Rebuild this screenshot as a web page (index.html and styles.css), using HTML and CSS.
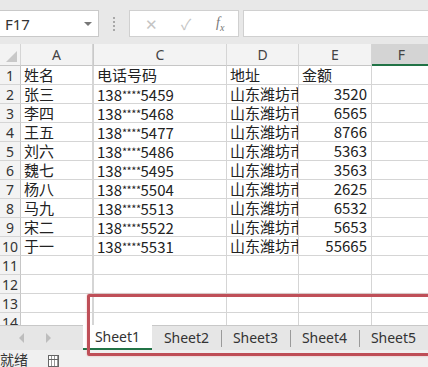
FILE: index.html
```html
<!DOCTYPE html>
<html lang="zh">
<head>
<meta charset="utf-8">
<link rel="stylesheet" href="styles.css">
</head>
<body>
<div class="app">
  <div class="toolbar">
    <div class="namebox"><span class="name">F17</span><span class="caret"></span></div>
    <div class="grip"><i></i><i></i><i></i><i></i></div>
    <div class="fbtns">
      <span class="fb">✕</span>
      <span class="fb">✓</span>
      <span class="fx">f<sub>x</sub></span>
    </div>
    <div class="finput"></div>
  </div>

  <div class="sheet">
    <div class="grid">
      <div class="ch corner"><span class="tri"></span></div>
      <div class="ch">A</div>
      <div class="ch hid">C</div>
      <div class="ch">D</div>
      <div class="ch">E</div>
      <div class="ch sel">F</div>

      <div class="rh">1</div><div class="c">姓名</div><div class="c hid">电话号码</div><div class="c">地址</div><div class="c">金额</div><div class="c"></div>
      <div class="rh">2</div><div class="c">张三</div><div class="c hid">138<span class="st">****</span>5459</div><div class="c clip">山东潍坊市</div><div class="c n">3520</div><div class="c"></div>
      <div class="rh">3</div><div class="c">李四</div><div class="c hid">138<span class="st">****</span>5468</div><div class="c clip">山东潍坊市</div><div class="c n">6565</div><div class="c"></div>
      <div class="rh">4</div><div class="c">王五</div><div class="c hid">138<span class="st">****</span>5477</div><div class="c clip">山东潍坊市</div><div class="c n">8766</div><div class="c"></div>
      <div class="rh">5</div><div class="c">刘六</div><div class="c hid">138<span class="st">****</span>5486</div><div class="c clip">山东潍坊市</div><div class="c n">5363</div><div class="c"></div>
      <div class="rh">6</div><div class="c">魏七</div><div class="c hid">138<span class="st">****</span>5495</div><div class="c clip">山东潍坊市</div><div class="c n">3563</div><div class="c"></div>
      <div class="rh">7</div><div class="c">杨八</div><div class="c hid">138<span class="st">****</span>5504</div><div class="c clip">山东潍坊市</div><div class="c n">2625</div><div class="c"></div>
      <div class="rh">8</div><div class="c">马九</div><div class="c hid">138<span class="st">****</span>5513</div><div class="c clip">山东潍坊市</div><div class="c n">6532</div><div class="c"></div>
      <div class="rh">9</div><div class="c">宋二</div><div class="c hid">138<span class="st">****</span>5522</div><div class="c clip">山东潍坊市</div><div class="c n">5653</div><div class="c"></div>
      <div class="rh">10</div><div class="c">于一</div><div class="c hid">138<span class="st">****</span>5531</div><div class="c clip">山东潍坊市</div><div class="c n">55665</div><div class="c"></div>
      <div class="rh">11</div><div class="c"></div><div class="c hid"></div><div class="c"></div><div class="c"></div><div class="c"></div>
      <div class="rh">12</div><div class="c"></div><div class="c hid"></div><div class="c"></div><div class="c"></div><div class="c"></div>
      <div class="rh">13</div><div class="c"></div><div class="c hid"></div><div class="c"></div><div class="c"></div><div class="c"></div>
      <div class="rh">14</div><div class="c"></div><div class="c hid"></div><div class="c"></div><div class="c"></div><div class="c"></div>
    </div>
  </div>

  <div class="tabbar">
    <div class="nav"><span class="arr left"></span><span class="arr right"></span></div>
    <div class="tabs">
      <div class="tab active">Sheet1</div>
      <div class="tab">Sheet2</div>
      <div class="tab">Sheet3</div>
      <div class="tab">Sheet4</div>
      <div class="tab">Sheet5</div>
    </div>
  </div>

  <div class="status">
    <span class="ready">就绪</span>
    <span class="macro"></span>
  </div>

  <div class="mark"></div>
</div>
</body>
</html>
```

FILE: styles.css
```css
* { box-sizing: border-box; }
html, body { margin: 0; padding: 0; }
body {
  width: 428px;
  height: 367px;
  overflow: hidden;
  background: #ffffff;
  font-family: "Noto Sans CJK SC", "Noto Sans", sans-serif;
  color: #222;
}
.app {
  position: relative;
  width: 428px;
  height: 367px;
  display: flex;
  flex-direction: column;
  overflow: hidden;
}

/* toolbar */
.toolbar {
  height: 44px;
  flex: none;
  background: #e8e8e8;
  display: flex;
  align-items: flex-start;
  padding-top: 10px;
}
.namebox {
  width: 100px;
  height: 27px;
  margin-left: -1px;
  background: #fff;
  border: 1px solid #c9c9c9;
  display: flex;
  align-items: center;
  justify-content: space-between;
  padding: 0 6px 0 5px;
}
.name { font-size: 15px; color: #333; font-family: "Noto Sans", sans-serif; }
.caret {
  width: 0; height: 0;
  border-left: 4px solid transparent;
  border-right: 4px solid transparent;
  border-top: 4px solid #777;
}
.grip {
  width: 30px;
  height: 27px;
  display: flex;
  flex-direction: column;
  align-items: center;
  justify-content: center;
  gap: 2px;
}
.grip i { width: 2px; height: 2px; background: #a8a8a8; display: block; }
.fbtns {
  width: 110px;
  height: 27px;
  background: #fff;
  border: 1px solid #d0d0d0;
  display: flex;
  align-items: center;
  padding-left: 12px;
  gap: 17px;
}
.fb { color: #c4c4c4; font-size: 15px; width: 18px; text-align: center; }
.fx {
  color: #777;
  font-family: "Liberation Serif", serif;
  font-style: italic;
  font-size: 14px;
  margin-left: 4px;
}
.fx sub { font-size: 10px; }
.finput {
  flex: 1;
  height: 27px;
  margin-left: 4px;
  background: #fff;
  border: 1px solid #d0d0d0;
  border-right: none;
}

/* sheet */
.sheet {
  height: 281px;
  flex: none;
  overflow: hidden;
  background: #fff;
}
.grid {
  display: grid;
  grid-template-columns: 21px 72px 134px 72px 73px 60px;
  grid-template-rows: 22px;
  grid-auto-rows: 19px;
}
.ch {
  background: #f3f3f3;
  border-right: 1px solid #d5d5d5;
  border-bottom: 1px solid #c6c6c6;
  font-size: 14px;
  color: #444;
  text-align: center;
  line-height: 22px;
  font-family: "Noto Sans", sans-serif;
}
.ch.hid { border-left: 1px solid #c9c9c9; }
.ch.sel {
  background: #d4d4d4;
  border-bottom: 2px solid #217346;
}
.corner { position: relative; }
.tri {
  position: absolute;
  right: 3px;
  bottom: 3px;
  width: 0; height: 0;
  border-left: 11px solid transparent;
  border-bottom: 11px solid #c8c8c8;
}
.rh {
  background: #f3f3f3;
  border-right: 1px solid #c6c6c6;
  border-bottom: 1px solid #d5d5d5;
  font-size: 14px;
  line-height: 19px;
  text-align: center;
  color: #333;
  font-family: "Noto Sans", sans-serif;
}
.c {
  border-right: 1px solid #d5d5d5;
  border-bottom: 1px solid #d5d5d5;
  font-size: 15px;
  line-height: 18px;
  padding-left: 3px;
  white-space: nowrap;
  color: #222;
}
.c.clip { overflow-x: clip; overflow-y: visible; }
.c.hid { border-left: 1px solid #d5d5d5; }
.c.n { text-align: right; padding-right: 4px; }
.st { font-size: 11px; vertical-align: 2px; letter-spacing: -0.5px; }

/* tabs */
.tabbar {
  height: 25px;
  flex: none;
  background: #e6e6e6;
  border-top: 1px solid #c8c8c8;
  display: flex;
}
.nav {
  width: 93px;
  display: flex;
  align-items: center;
  padding-left: 19px;
  gap: 22px;
}
.arr { width: 0; height: 0; border-top: 5px solid transparent; border-bottom: 5px solid transparent; }
.arr.left { border-right: 5px solid #bdbdbd; }
.arr.right { border-left: 5px solid #bdbdbd; }
.tabs { display: flex; }
.tab {
  width: 69px;
  font-size: 14px;
  font-family: "Noto Sans", sans-serif;
  color: #333;
  text-align: center;
  line-height: 23px;
  position: relative;
}
.tab + .tab::before {
  content: "";
  position: absolute;
  left: 0;
  top: 4px;
  height: 17px;
  border-left: 1px solid #9a9a9a;
}
.tab.active {
  background: #fff;
  margin-top: -1px;
  border-bottom: 2px solid #217346;
}
.tab.active + .tab::before { display: none; }

/* status */
.status {
  flex: 1;
  background: #f0f0f0;
  display: flex;
  align-items: flex-end;
  gap: 20px;
}
.ready { font-size: 14px; line-height: 16px; color: #333; }
.macro {
  width: 11px;
  height: 12px;
  border: 1px solid #666;
  background:
    linear-gradient(#666, #666) 0 3px / 100% 1px no-repeat,
    repeating-linear-gradient(90deg, #fff 0 2px, #999 2px 3px);
}

/* annotation overlay */
.mark {
  position: absolute;
  left: 87px;
  top: 294px;
  width: 360px;
  height: 62px;
  border: 3px solid #bf4f58;
  border-radius: 2px;
  box-shadow: 0 0 2px rgba(220, 120, 120, 0.6);
  pointer-events: none;
}
```
